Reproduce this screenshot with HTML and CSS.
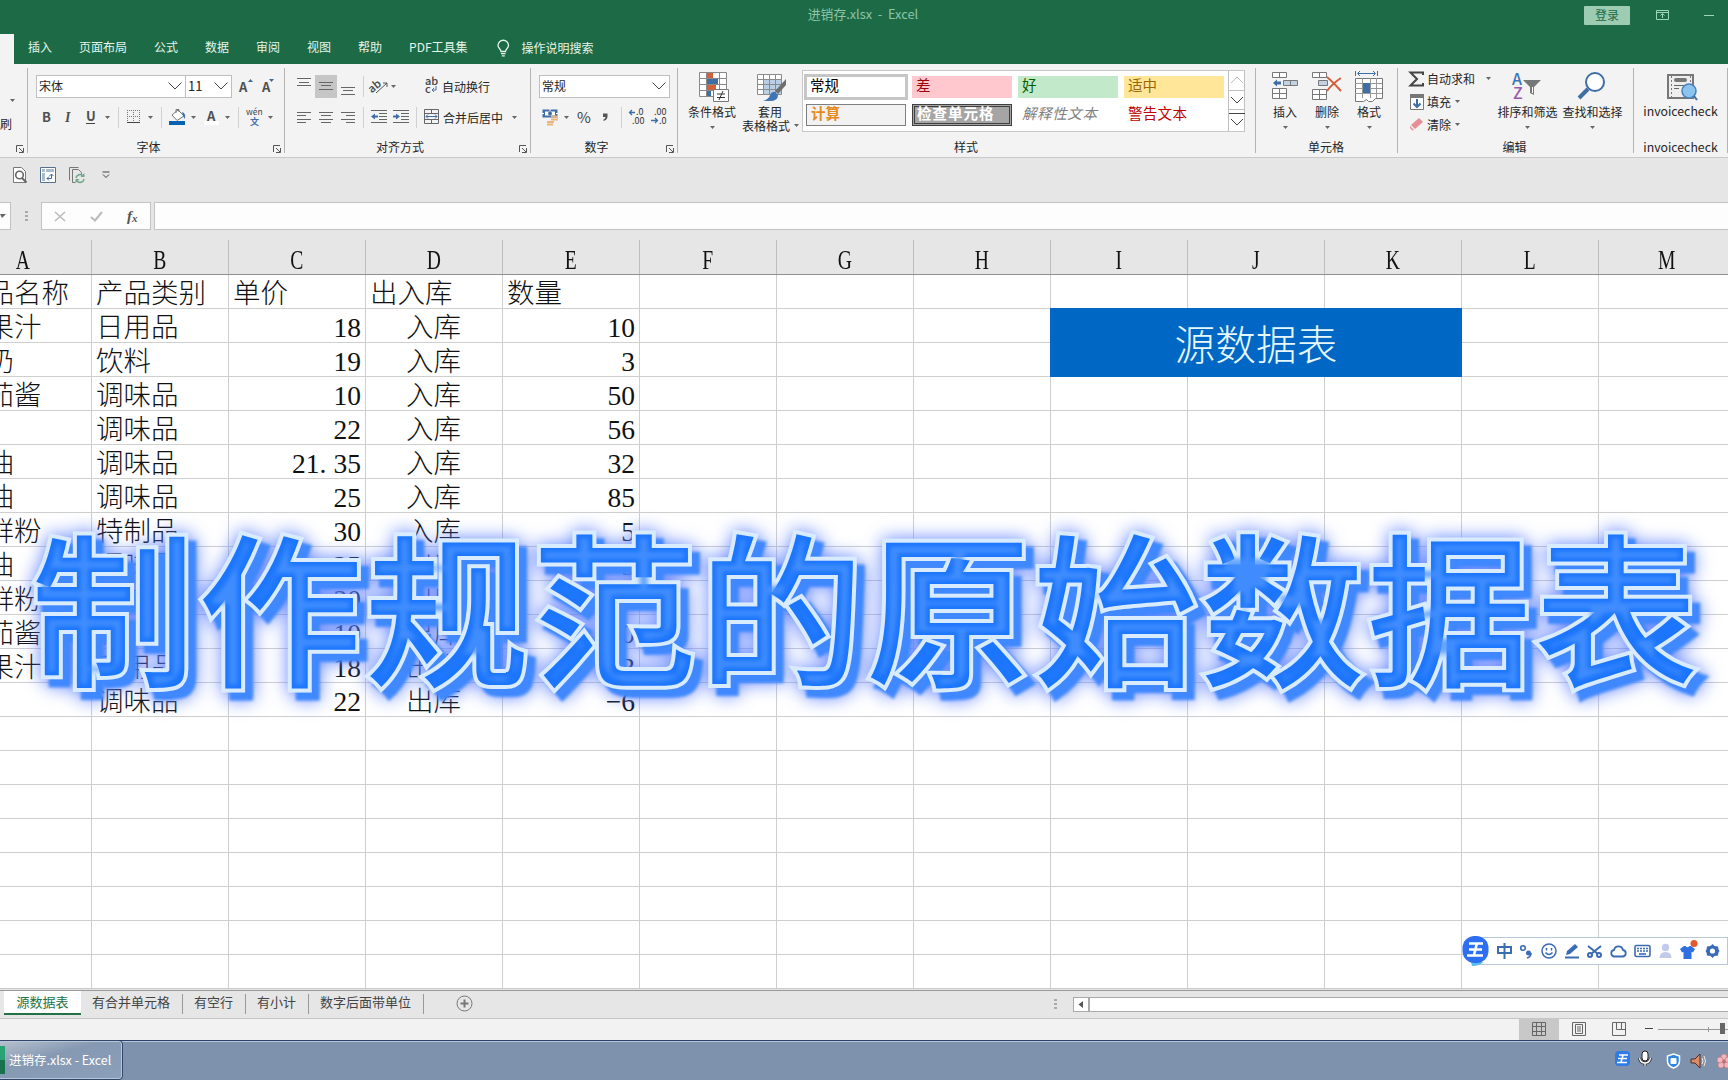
FILE: index.html
```html
<!DOCTYPE html>
<html lang="zh-CN">
<head>
  <meta charset="UTF-8">
  <meta name="viewport" content="width=device-width, initial-scale=1.0">
  <title>进销存.xlsx - Excel</title>
  <link rel="stylesheet" href="styles.css">
</head>
<body>
  <header class="titlebar">
    <div class="doc-title">进销存.xlsx&nbsp; - &nbsp;Excel</div>
    <div class="window-tools">
      <button class="login">登录</button>
      <svg width="13" height="10" fill="none" stroke="#9fd6b9"><path d="M.5.5h12v9H.5zM.5 2.500h12M6.500 8V4M4.500 5.500l2-2 2 2"/></svg>
      <svg width="10" height="10" stroke="#9fd6b9"><path d="M0 5.500h10"/></svg>
    </div>
  </header>

  <nav class="tabs">
    <span class="tab-active"></span>
    <a>插入</a><a>页面布局</a><a>公式</a><a>数据</a><a>审阅</a><a>视图</a><a>帮助</a><a>PDF工具集</a>
    <a class="tell-me">
      <svg width="13" height="17" fill="none" stroke="#e4f5ea" stroke-width="1.300"><path d="M4 11.500C4 9 1 8.500 1 5.500a5 5 0 0 1 10.500 0C11.500 8.500 8.500 9 8.500 11.500zM4 13.700h4.500M4.800 15.800h3"/></svg>
      操作说明搜索
    </a>
  </nav>

  <section class="ribbon">
    <div class="group group-clip">
      <svg width="27" height="70"><path d="M10 35h5l-2.500 3z" fill="#666"/></svg>
      <span class="clip-text">刷</span>
      <svg class="launcher" width="8" height="8"><use href="#launch"/></svg>
    </div>

    <div class="group group-font">
      <div class="row">
        <div class="combo combo-font">宋体<svg width="14" height="8"><use href="#chev"/></svg></div>
        <div class="combo combo-size">11<svg width="14" height="8"><use href="#chev"/></svg></div>
        <svg width="50" height="23" class="glyphs"><text x="7" y="17" font-size="14">A</text><path d="M16 7h5l-2.500-3z" fill="#44698f"/><text x="30" y="17" font-size="12">A</text><path d="M37 4h5l-2.500 3z" fill="#44698f"/></svg>
      </div>
      <div class="row">
        <svg width="82" height="23" class="glyphs"><text x="6" y="15.500">B</text><text x="29" y="15.500" class="ital">I</text><text x="50" y="15">U</text><path d="M50 17.500h9" stroke="#444"/><path d="M69 10h5l-2.500 3z" fill="#666"/></svg>
        <i class="sep"></i>
        <svg width="42" height="23"><path d="M8.500 4v13M14.500 4v13M20.500 4v13M8 4.500h13M8 10.500h13" stroke="#777" stroke-dasharray="1 1"/><path d="M8 16.500h13" stroke="#444"/><path d="M29 10h5l-2.500 3z" fill="#666"/></svg>
        <i class="sep"></i>
        <svg width="76" height="23" class="glyphs"><path d="M10 9l6-5 6 6-7 4.500zM14 7V3.500h3V6" fill="#fff" stroke="#777"/><path d="M20 6q4 1 3 7l-2-3z" fill="#3f6ea5"/><path d="M7 15h16v4H7z" fill="#0563b0"/><path d="M29 10h5l-2.500 3z" fill="#666"/><path d="M42 15h15v4H42z" fill="#fff"/><text x="45" y="15">A</text><path d="M63 10h5l-2.500 3z" fill="#666"/></svg>
        <i class="sep"></i>
        <svg width="40" height="23"><text x="7" y="9" font-size="8.500" fill="#444">wén</text><text x="11" y="19" font-size="9" font-weight="700" fill="#4a70b0">文</text><path d="M29 10h5l-2.500 3z" fill="#666"/></svg>
      </div>
      <div class="label">字体</div>
      <svg class="launcher" width="8" height="8"><use href="#launch"/></svg>
    </div>

    <div class="group group-align">
      <div class="row">
        <svg width="69" height="23" stroke="#666"><path d="M21 0h22v23H21z" fill="#c6c6c6" stroke="none"/><path d="M3 3.500h14M5 7.500h10M3 10.500h14M25 7.500h14M27 10.500h10M25 14.500h14M47 12.500h14M49 15.500h10M47 19.500h14"/></svg>
        <i class="sep"></i>
        <svg width="53" height="23"><text x="4" y="14" font-size="11" font-weight="500" fill="#444" transform="rotate(-40 12 11)">ab</text><path d="M12 18l11-10M23 8v4M23 8h-4" fill="none" stroke="#555"/><path d="M27 10h5l-2.500 3z" fill="#666"/></svg>
        <svg width="25" height="23"><text x="8" y="9.500" font-size="11" font-weight="500" fill="#444">ab</text><text x="8" y="18" font-size="11" font-weight="500" fill="#444">c</text><path d="M19 11v4h-4M17 13l-2 2 2 2" fill="none" stroke="#4a70a0"/></svg>
        <span>自动换行</span>
      </div>
      <div class="row">
        <svg width="69" height="23" stroke="#666"><path d="M3 6.500h14M3 9.500h9M3 13.500h14M3 16.500h9M25 6.500h14M27 9.500h10M25 13.500h14M27 16.500h10M47 6.500h14M52 9.500h9M47 13.500h14M52 16.500h9"/></svg>
        <i class="sep"></i>
        <svg width="52" height="23"><path d="M7 4.500h16M15 7.500h8M15 10.500h8M15 13.500h8M7 16.500h16M29 4.500h16M37 7.500h8M37 10.500h8M37 13.500h8M29 16.500h16" stroke="#666"/><path d="M7 10.500l4-3v2h3v2h-3v2zM36 10.500l-4-3v2h-3v2h3v2z" fill="#3f6ea5"/></svg>
        <i class="sep"></i>
        <svg width="26" height="23" fill="none"><path d="M7.500 3.500h14v14h-14zM7.500 7.500h14M7.500 13.500h14M14.500 3.500v4M14.500 13.500v4" stroke="#666"/><path d="M9 10.500h11M11 8.500l-2 2 2 2M18 8.500l2 2-2 2" stroke="#3f6ea5"/></svg>
        <span>合并后居中</span>
        <svg width="20" height="23"><path d="M9 10h5l-2.500 3z" fill="#666"/></svg>
      </div>
      <div class="label">对齐方式</div>
      <svg class="launcher" width="8" height="8"><use href="#launch"/></svg>
    </div>

    <div class="group group-number">
      <div class="row">
        <div class="combo combo-number">常规<svg width="14" height="8"><use href="#chev"/></svg></div>
      </div>
      <div class="row">
        <svg width="82" height="23"><path d="M3.500 3.500h15v8h-15z" fill="#3f6ea5"/><path d="M6 5.500h10v4H6z" fill="#fff"/><path d="M3 7.500h2M17 7.500h2M11 3v2" stroke="#fff"/><circle cx="11" cy="7.500" r="2" fill="#3f6ea5"/><path d="M12 10.500h7M12 13.500h7M8 16h7M8 18.500h6" stroke="#eab579" stroke-width="2"/><path d="M25 10h5l-2.500 3z" fill="#666"/><text x="38" y="17" font-size="15" fill="#444">%</text><path d="M64 7.500h4.500v3q0 3-4 4.500v-1.500q2-1 2-2.500H64z" fill="#555"/></svg>
        <i class="sep"></i>
        <svg width="50" height="23" class="decimals"><text x="14" y="9">.0</text><text x="10" y="18">.00</text><path d="M13 6.500H8M10 4L7.500 6.500 10 9" /><text x="32" y="9">.00</text><text x="37" y="18">.0</text><path d="M29 14.500h6M33 12l2.500 2.500L33 17"/></svg>
      </div>
      <div class="label">数字</div>
      <svg class="launcher" width="8" height="8"><use href="#launch"/></svg>
    </div>

    <div class="group group-styles">
      <div class="big-buttons">
        <div class="big big-cond">
          <svg width="26" height="31"><path d="M.5.5h27v24H.5z" fill="#fff"/><path d="M8 1h6v5H8zM8 13h9v5H8z" fill="#d1603d"/><path d="M8 7h11v5H8zM8 19h4v5H8z" fill="#3f6ea5"/><path d="M.5.5h27v24H.500zM.5 6.500h27M.5 12.500h27M.5 18.500h27M7.500.5v24M20.500.5v24" fill="none" stroke="#8a8a8a"/><path d="M14.500 17.500h15v12h-15z" fill="#fff" stroke="#777"/><path d="M18 22h8M18 25.500h8M24 19l-4 9" stroke="#333"/></svg>
          <span>条件格式</span>
          <svg width="5" height="3"><use href="#caret"/></svg>
        </div>
        <div class="big big-table">
          <svg width="27" height="31"><path d="M.5 2.500h24v20H.5z" fill="#fff"/><path d="M7 8h18v14H7z" fill="#b9cfe6"/><path d="M.5 2.500h24v20H.5zM.5 7.500h24M.5 12.500h24M.5 17.500h24M6.500 2.500v20M12.500 2.500v20M18.500 2.500v20" fill="none" stroke="#8a8a8a"/><path d="M29 7v6l-8 9-3-3z" fill="#6e6e6e"/><path d="M18 20l3 3q0 6-8 6H6q6-2 7-6 2-4 5-3z" fill="#3f74b5"/></svg>
          <span>套用</span>
          <span class="with-caret">表格格式<svg width="5" height="3"><use href="#caret"/></svg></span>
        </div>
      </div>
      <div class="gallery">
        <div class="swatches">
          <div class="sw sw-normal">常规</div><div class="sw sw-bad">差</div><div class="sw sw-good">好</div><div class="sw sw-neutral">适中</div>
          <div class="sw sw-calc">计算</div><div class="sw sw-check">检查单元格</div><div class="sw sw-explain">解释性文本</div><div class="sw sw-warn">警告文本</div>
        </div>
        <div class="gallery-nav">
          <svg width="16" height="20" fill="none" stroke="#bbb"><path d="M2 12l6-6 6 6"/></svg>
          <svg width="16" height="19" fill="none" stroke="#444"><path d="M2 6l6 6 6-6"/></svg>
          <svg width="16" height="21" fill="none" stroke="#444"><path d="M0 3.500h16M2 9l6 6 6-6"/></svg>
        </div>
      </div>
      <div class="label">样式</div>
    </div>

    <div class="group group-cells">
      <div class="big-buttons">
        <div class="big">
          <svg width="28" height="31"><path d="M1.500.5h14v5h-14zM8.500.5v5M1.500 16.500h14v10h-14zM8.500 16.500v10M1.500 21.500h14" fill="#fff" stroke="#777"/><path d="M12.500 8.500h14v5h-14zM19.500 8.500v5" fill="#c3d3e3" stroke="#777"/><path d="M2 11l4-3.500v2h4v3H6v2z" fill="#3f6ea5"/></svg>
          <span>插入</span>
          <svg width="5" height="3"><use href="#caret"/></svg>
        </div>
        <div class="big">
          <svg width="30" height="31"><path d="M.5.5h14v5H.5zM7.500.5v5M.5 17.500h14v10H.5zM7.500 17.500v10M.5 22.500h14" fill="#fff" stroke="#777"/><path d="M6.500 8.500h9v5h-9z" fill="#c3d3e3" stroke="#777"/><path d="M15 5q6 5 14 14M29 6q-8 5-14 13" fill="none" stroke="#d1603d" stroke-width="2"/></svg>
          <span>删除</span>
          <svg width="5" height="3"><use href="#caret"/></svg>
        </div>
        <div class="big">
          <svg width="30" height="31"><path d="M1.500 6.500h27v20h-7l-3 3h-4l-2-2-3 2h-8z" fill="#fff" stroke="#777"/><path d="M1 11.500h27M1 16.500h27M1 21.500h27M8.500 6v20M16.500 6v20M22.500 6v20" stroke="#999"/><path d="M9 11h7v10H9z" fill="#3f6ea5"/><path d="M1.500-1v5M23.500-1v5M4 1.500h17M6-1L3.500 1.500 6 4M19-1l2.500 2.500L19 4" fill="none" stroke="#3f6ea5"/></svg>
          <span>格式</span>
          <svg width="5" height="3"><use href="#caret"/></svg>
        </div>
      </div>
      <div class="label">单元格</div>
    </div>

    <div class="group group-edit">
      <div class="small-list">
        <div><svg width="15" height="16"><path d="M14 4V1.500H1.500L8 8l-6.500 6.500H14V12" fill="none" stroke="#444" stroke-width="2"/></svg>自动求和<svg class="far" width="5" height="3"><use href="#caret"/></svg></div>
        <div><svg width="15" height="16"><path d="M1.500.5h13v15h-13z" fill="#fff" stroke="#777"/><path d="M1 0h14v4H1z" fill="#777"/><path d="M8 5v8M4.500 9.500L8 13l3.500-3.500" fill="none" stroke="#3f6ea5" stroke-width="2"/></svg>填充<svg width="5" height="3"><use href="#caret"/></svg></div>
        <div><svg width="15" height="16"><path d="M2 8l8-7 4 4-8 7z" fill="#e58e98"/><path d="M1 9l4 4-1.500.5L1 11z" fill="#e58e98"/></svg>清除<svg width="5" height="3"><use href="#caret"/></svg></div>
      </div>
      <div class="big-buttons">
        <div class="big">
          <svg width="30" height="31"><text x="-1" y="13" font-size="16" font-weight="500" fill="#3f74b5">A</text><text x="0" y="27" font-size="16" font-weight="500" fill="#9a5ab0">Z</text><path d="M10 8h18l-7 7v8l-4-2v-6z" fill="#777"/><path d="M19.500 15v6" stroke="#fff"/></svg>
          <span>排序和筛选</span>
          <svg width="5" height="3"><use href="#caret"/></svg>
        </div>
        <div class="big">
          <svg width="30" height="31"><circle cx="17" cy="10" r="9" fill="#fff" stroke="#3f6ea5" stroke-width="2"/><path d="M10 17L1 26" stroke="#3f6ea5" stroke-width="4"/></svg>
          <span>查找和选择</span>
          <svg width="5" height="3"><use href="#caret"/></svg>
        </div>
      </div>
      <div class="label">编辑</div>
    </div>

    <div class="group group-invoice">
      <div class="big-buttons">
        <div class="big">
          <svg width="30" height="31"><path d="M2 3h25v23H2z" fill="#eee" stroke="#777" stroke-width="2"/><path d="M5.500 4v21M24.500 4v21" stroke="#777" stroke-dasharray="2 2"/><rect x="8" y="6" width="13" height="4" rx="2" fill="#777"/><path d="M8 13.500h10M8 16.500h5" stroke="#666"/><circle cx="23" cy="19" r="7" fill="#8cc4ef" stroke="#4a80b8" stroke-width="1.500"/><path d="M28 24l3 4" stroke="#3f6ea5" stroke-width="2"/></svg>
          <span>invoicecheck</span>
        </div>
      </div>
      <div class="label">invoicecheck</div>
    </div>
  </section>

  <div class="quickbar">
    <svg width="14" height="16" fill="none"><path d="M.5.5h8l4 4v11H.5z" fill="#fff" stroke="#777"/><circle cx="6.500" cy="8" r="3.800" stroke="#666" stroke-width="1.600"/><path d="M9 11l4.500 4.500" stroke="#666" stroke-width="2"/></svg>
    <svg width="16" height="16" fill="none"><path d="M.5.5h15v15H.5z" fill="#fff" stroke="#54708c"/><path d="M2 2h3v3H2zM6 2h8v3H6zM2 6h3v8H2z" fill="#a9bccd"/><path d="M11.500 7v4.500H7M9.500 9l2-2 2 2M9 9.500l-2 2 2 2" stroke="#3f6ea5"/></svg>
    <svg width="17" height="16" fill="none"><path d="M.5 13.500V.5h9M3.500 15.500V2.500h6l3 3v3M3.500 15.500h3" stroke="#777"/><path d="M7 11a4 4 0 0 1 7-2M15 12a4 4 0 0 1-7 2" stroke="#6fa78c" stroke-width="1.600"/><path d="M15.500 6v4h-4zM6.500 16v-4h4z" fill="#6fa78c"/></svg>
    <svg width="8" height="8" fill="none" stroke="#444"><path d="M.5 1h7M1 3.500L4 6.500l3-3"/></svg>
  </div>

  <div class="formula">
    <div class="namebox"><svg width="6" height="4"><path d="M0 0h6L2 4z" fill="#666"/></svg></div>
    <div class="dots"></div>
    <div class="fx">
      <svg width="12" height="11" fill="none" stroke="#bbb" stroke-width="1.600"><path d="M1 1l10 9M11 1L1 10"/></svg>
      <svg width="13" height="11" fill="none" stroke="#bbb" stroke-width="2"><path d="M1 6l4 3.500L12 1"/></svg>
      <em>f<sub>x</sub></em>
    </div>
    <div class="input"></div>
  </div>

  <main class="sheet">
    <div class="cols">
      <b>A</b><b>B</b><b>C</b><b>D</b><b>E</b><b>F</b><b>G</b><b>H</b><b>I</b><b>J</b><b>K</b><b>L</b><b>M</b>
    </div>
    <div class="cells">
      <span>产品名称</span><span>产品类别</span><span>单价</span><span>出入库</span><span>数量</span>
      <span>苹果汁</span><span>日用品</span><span class="num">18</span><span class="mid">入库</span><span class="num">10</span>
      <span>牛奶</span><span>饮料</span><span class="num">19</span><span class="mid">入库</span><span class="num">3</span>
      <span>番茄酱</span><span>调味品</span><span class="num">10</span><span class="mid">入库</span><span class="num">50</span>
      <span>盐</span><span>调味品</span><span class="num">22</span><span class="mid">入库</span><span class="num">56</span>
      <span>酱油</span><span>调味品</span><span class="num">21<i>.</i>35</span><span class="mid">入库</span><span class="num">32</span>
      <span>香油</span><span>调味品</span><span class="num">25</span><span class="mid">入库</span><span class="num">85</span>
      <span>海鲜粉</span><span>特制品</span><span class="num">30</span><span class="mid">入库</span><span class="num">5</span>
      <span>酱油</span><span>调味品</span><span class="num">25</span><span class="mid">出库</span><span class="num">-5</span>
      <span>海鲜粉</span><span>特制品</span><span class="num">30</span><span class="mid">出库</span><span class="num">-1</span>
      <span>番茄酱</span><span>调味品</span><span class="num">10</span><span class="mid">出库</span><span class="num">-10</span>
      <span>苹果汁</span><span>日用品</span><span class="num">18</span><span class="mid">出库</span><span class="num">-3</span>
      <span>盐</span><span>调味品</span><span class="num">22</span><span class="mid">出库</span><span class="num">−6</span>
    </div>
    <div class="merged">源数据表</div>
  </main>

  <footer class="sheet-tabs">
    <span class="current">源数据表</span><span>有合并单元格</span><span>有空行</span><span>有小计</span><span>数字后面带单位</span>
    <svg class="add" width="17" height="17" fill="none" stroke="#777"><circle cx="8.500" cy="8.500" r="7.500"/><path d="M8.500 4.500v8M4.500 8.500h8" stroke-width="2"/></svg>
    <div class="dots dots-scroll"></div>
    <div class="hscroll"><svg width="14" height="13"><path d="M9 3v7L4.500 6.500z" fill="#555"/></svg></div>
  </footer>

  <div class="status">
    <span class="view on"><svg width="14" height="14" fill="none" stroke="#666"><path d="M.5.5h13v13H.5zM4.500.5v13M9.500.5v13M.5 4.500h13M.5 9.500h13"/></svg></span>
    <span class="view"><svg width="14" height="14" fill="none" stroke="#666"><path d="M.5.5h13v13H.5zM3.500 2.500h7v9h-7zM5 5h4M5 7h4M5 9h4"/></svg></span>
    <span class="view"><svg width="14" height="14" fill="none" stroke="#666"><path d="M.5.5h13v13H.5zM4.500.5v7h5v-7M9 7.500h4"/></svg></span>
    <svg width="89" height="20"><path d="M6 9.500h8" stroke="#444"/><path d="M19 10.500h70M69.500 8v5" stroke="#999"/><path d="M81 4h5v11h-5z" fill="#666"/></svg>
  </div>

  <div class="taskbar">
    <div class="task"><i class="task-icon"></i>进销存.xlsx - Excel</div>
    <div class="tray">
      <svg width="16" height="16"><rect width="15" height="15" rx="4" fill="#2f7be8"/><path d="M4 4h9M3 7.500h9M2 11.500h10M8 4l-2 7.500" stroke="#fff" stroke-width="1.600"/></svg>
      <svg width="14" height="17"><rect x="4" y="1" width="6" height="10" rx="3" fill="#fff" stroke="#222"/><path d="M1.500 8q1 5 5.500 5t5.500-5M7 13v3" fill="none" stroke="#222" stroke-width="3"/><path d="M1.500 8q1 5 5.500 5t5.500-5M7 13v3" fill="none" stroke="#fff" stroke-width="1.300"/></svg>
      <svg width="15" height="16"><path d="M7.500 1l6 2v5q0 5-6 7-6-2-6-7V3z" fill="#2f87e0" stroke="#fff" stroke-width="1.500"/><rect x="4.500" y="5" width="6" height="6" rx="1" fill="#fff"/></svg>
      <svg width="17" height="16"><path d="M1 6h4l5-5v14l-5-5H1z" fill="#d98a66" stroke="#5a2a1a"/><path d="M12 5q2 3 0 6M14 3q3 5 0 10" fill="none" stroke="#f3e8e0"/></svg>
      <svg width="16" height="16" fill="#f0b8bc" stroke="#c3787f" stroke-width=".7"><circle cx="8" cy="4" r="3"/><circle cx="12" cy="7" r="3"/><circle cx="11" cy="12" r="3"/><circle cx="5" cy="12" r="3"/><circle cx="4" cy="7" r="3"/><circle cx="8" cy="8.500" r="1.500" fill="#c86a76"/></svg>
    </div>
  </div>

  <!-- input method toolbar floating over the sheet -->
  <div class="ime">
    <svg class="ime-logo" width="27" height="31"><path d="M9 26h12q-3 4-11 4z" fill="#56bdf5"/><rect x=".5" width="26" height="27" rx="12" fill="#2d6ff0"/><path d="M7 7.500h14M7 13.500h13M5 19.500h16M15 7l-3 12" stroke="#fff" stroke-width="2.600"/></svg>
    <svg width="15" height="16" fill="none" stroke="#3a6bb5" stroke-width="2"><path d="M1 4h13v6H1zM7.500 0v16"/></svg>
    <svg width="14" height="16"><circle cx="4" cy="5" r="2.300" fill="none" stroke="#3a6bb5" stroke-width="1.600"/><circle cx="9.500" cy="10" r="2.500" fill="#3a6bb5"/><path d="M12 10q0 4-4 5" fill="none" stroke="#3a6bb5" stroke-width="1.600"/></svg>
    <svg width="16" height="16" fill="none" stroke="#3a6bb5" stroke-width="1.500"><circle cx="8" cy="8" r="7"/><path d="M4.500 9.500q3.500 4 7 0M5.500 5v2.500M10.500 5v2.500"/></svg>
    <svg width="15" height="16"><path d="M2 12l1-4 8-7 3 3-8 7z" fill="#3a6bb5"/><path d="M1 14.500h14" stroke="#3a6bb5" stroke-width="2"/></svg>
    <svg width="15" height="16" fill="none" stroke="#3a6bb5" stroke-width="2"><path d="M1 3l10 8M14 3L4 11"/><circle cx="3" cy="12" r="2"/><circle cx="12" cy="12" r="2"/></svg>
    <svg width="17" height="16" fill="none" stroke="#3a6bb5" stroke-width="1.800"><path d="M4 13.500a3.300 3.300 0 0 1 0-6.500 4.600 4.600 0 0 1 9 0 3.300 3.300 0 0 1 0 6.500z"/></svg>
    <svg width="17" height="16" fill="none" stroke="#3a6bb5" stroke-width="1.600"><rect x="1" y="2.500" width="15" height="11" rx="1.500"/><path d="M3 5.500h11M3 8h11" stroke-dasharray="2 1"/><path d="M5 11h7"/></svg>
    <svg width="13" height="16" fill="#c3cbea"><circle cx="6.500" cy="4.500" r="3.700"/><path d="M.5 15q0-6 6-6t6 6z"/></svg>
    <svg width="18" height="20"><path d="M1 8l4-3h1.500q2 2.500 4 0H12l4 3-2 3.500-1.500-.8V18h-8v-7.300L3 11.500z" fill="#2f6fe0"/><circle cx="15" cy="2.500" r="3.500" fill="#e8572c"/></svg>
    <svg width="15" height="16"><path d="M7.500 1l2 2 3.500.5.5 3 1 1.500-1 1.500-.5 3-3.500.5-2 2-2-2-3.500-.5-.5-3L.5 8l1-1.500.5-3L5.500 3z" fill="#3a6bb5"/><circle cx="7.500" cy="8" r="2.600" fill="#fff"/></svg>
  </div>

  <div class="banner"><span>制作规范的原始数据表</span></div>

  <svg class="defs" width="0" height="0">
    <symbol id="caret"><path d="M0 0h5L2.500 3z" fill="#666"/></symbol>
    <symbol id="chev"><path d="M.5.5L7 7l6.500-6.500" fill="none" stroke="#444"/></symbol>
    <symbol id="launch"><path d="M.5 7V.5H7M3 3l4 4M7.500 3v4.500H3" fill="none" stroke="#555"/></symbol>
    <!-- soft light line along the middle of each stroke -->
    <filter id="core" x="-2%" y="-5%" width="104%" height="110%" color-interpolation-filters="sRGB">
      <feMorphology in="SourceAlpha" operator="erode" radius="8"/>
      <feGaussianBlur stdDeviation="2" result="mid"/>
      <feFlood flood-color="#4a92ff" flood-opacity=".8"/>
      <feComposite in2="mid" operator="in" result="light"/>
      <feMerge><feMergeNode in="SourceGraphic"/><feMergeNode in="light"/></feMerge>
    </filter>
  </svg>
</body>
</html>
```
FILE: styles.css
```css
* {
  box-sizing: border-box;
}
body {
  margin: 0;
  width: 1728px;
  height: 1080px;
  overflow: hidden;
  position: relative;
  background: #e6e6e6;
  color: #262626;
  font: 12px/16px "Noto Sans CJK SC", sans-serif;
}
svg {
  display: block;
  flex: none;
  overflow: visible;
}
.defs {
  position: absolute;
}

/* title and tabs */
.titlebar {
  height: 34px;
  background: #1c6a46;
  display: grid;
  grid-template-columns: 1fr auto 1fr;
  align-items: center;
  padding-bottom: 4px;
}
.doc-title {
  grid-column: 2;
  color: #8fc4a6;
  font-size: 12.800px;
  line-height: 14px;
  padding: 0 2px 2px 0;
  white-space: pre;
}
.window-tools {
  display: flex;
  justify-content: flex-end;
  align-items: center;
  padding-right: 14px;
}
.window-tools svg {
  margin-left: 26px;
}
.window-tools svg + svg {
  margin-left: 35px;
}
.login {
  width: 46px;
  height: 19px;
  padding: 0;
  border: 0;
  border-radius: 1px;
  background: #9dccb2;
  color: #1c6a46;
  font: 12px/18px "Noto Sans CJK SC", sans-serif;
}
.tabs {
  height: 30px;
  background: #1c6a46;
  color: #e4f5ea;
  display: flex;
  align-items: flex-start;
  gap: 27px;
  line-height: 26px;
}
.tab-active {
  width: 14px;
  height: 30px;
  margin-right: -13px;
  background: #f3f3f3;
}
.tell-me {
  display: flex;
  align-items: center;
  gap: 12px;
  margin-left: 2px;
  padding-top: 1px;
}

/* ribbon */
.ribbon {
  height: 94px;
  background: #f3f3f3;
  border-bottom: 1px solid #c8c8c8;
  display: flex;
}
.group {
  position: relative;
  flex: none;
  height: 93px;
  padding: 11px 0 0 8px;
}
.group::after {
  content: "";
  position: absolute;
  right: 0;
  top: 4px;
  width: 1px;
  height: 85px;
  background: #b4b4b4;
}
.group-clip { width: 28px; padding: 0; }
.group-font { width: 257px; }
.group-align { width: 246px; padding-left: 9px; }
.group-number { width: 147px; }
.group-styles { width: 578px; padding: 0 0 0 6px; display: flex; }
.group-cells { width: 142px; padding: 0 0 0 8px; }
.group-edit { width: 236px; padding: 0 0 0 11px; display: flex; }
.group-invoice { width: 94px; padding: 0; }
.clip-text {
  position: absolute;
  left: 0;
  top: 52px;
}
.row {
  display: flex;
  align-items: center;
  height: 23px;
  margin-bottom: 8px;
  white-space: nowrap;
}
.row > span {
  line-height: 15px;
  margin-top: -1px;
}
.label {
  position: absolute;
  left: 0;
  right: 16px;
  top: 75px;
  text-align: center;
}
.group-styles .label,
.group-cells .label { right: 2px; }
.group-edit .label { right: 3px; }
.group-invoice .label { right: 1px; }
.launcher {
  position: absolute;
  right: 4px;
  top: 81px;
}
.sep {
  width: 1px;
  height: 21px;
  background: #d0d0d0;
}
.combo {
  height: 23px;
  border: 1px solid #bfbfbf;
  background: #fff;
  display: flex;
  align-items: center;
  justify-content: space-between;
  padding: 0 3px 1px 2px;
}
.combo-font { width: 150px; }
.combo-size { width: 47px; margin-left: -1px; font-size: 13px; }
.combo-number { width: 131px; }
.glyphs text {
  font-size: 13px;
  font-weight: 700;
  fill: #505050;
}
.glyphs .ital {
  font-family: "Liberation Serif", serif;
  font-style: italic;
  font-size: 14px;
}
.decimals text {
  font-size: 9px;
  fill: #333;
}
.decimals path {
  fill: none;
  stroke: #3f6ea5;
  stroke-width: 1.300;
}
.big-buttons {
  display: flex;
  padding-top: 8px;
}
.big {
  width: 42px;
  display: flex;
  flex-direction: column;
  align-items: center;
  white-space: nowrap;
}
.big span {
  line-height: 15px;
}
.big > svg + span {
  padding-top: 1px;
  margin-bottom: -1px;
}
.big > svg + span + svg {
  margin-top: 8px;
}
.big-cond { width: 56px; }
.big-table { width: 60px; }
.big .with-caret {
  display: flex;
  align-items: center;
  margin-right: -1px;
}
.with-caret svg {
  margin-left: 4px;
}
.group-edit .big-buttons { margin-left: -2px; }
.group-edit .big { width: 65px; }
.group-invoice .big { width: 93px; }
.group-invoice { font-size: 12.300px; }
.small-list {
  width: 88px;
  padding-top: 3px;
}
.small-list div {
  display: flex;
  align-items: center;
  height: 23px;
  gap: 3px;
  white-space: nowrap;
}
.small-list svg:last-child {
  margin-left: 1px;
}
.small-list .far:last-child {
  margin-left: 8px;
}

/* style gallery */
.gallery {
  width: 443px;
  height: 62px;
  margin: 6px 0 0 2px;
  background: #fff;
  border: 1px solid #c8c8c8;
  border-right: 0;
  display: flex;
  justify-content: space-between;
}
.swatches {
  display: grid;
  grid-template-columns: repeat(4, 100px);
  grid-auto-rows: 22px;
  gap: 6px;
  padding: 5px 0 0 3px;
  font-size: 14.500px;
  line-height: 18px;
}
.sw {
  padding-left: 4px;
  white-space: nowrap;
}
.sw-normal {
  color: #000;
  outline: 3px solid #c6c6c6;
  outline-offset: -1px;
}
.sw-bad { background: #ffc7ce; color: #9c0006; }
.sw-good { background: #c3e9cb; color: #006100; }
.sw-neutral { background: #ffe699; color: #9c6500; }
.sw-calc,
.sw-check {
  font-weight: 700;
  line-height: 15px;
}
.sw-calc { border: 1px solid #7f7f7f; background: #f2f2f2; color: #e58a1f; }
.sw-check {
  border: 3px double #3f3f3f;
  background: #a5a5a5;
  color: #fff;
  padding-left: 2px;
  line-height: 12px;
  letter-spacing: 1px;
}
.sw-explain { color: #7f7f7f; font-style: italic; letter-spacing: .6px; }
.sw-warn { color: #c00000; letter-spacing: .3px; }
.gallery-nav svg {
  border: solid #c0c0c0;
  border-width: 0 1px 1px;
  width: 17px;
}
.gallery-nav svg:last-child {
  border-bottom: 0;
}

/* quick access and formula bar */
.quickbar {
  height: 44px;
  display: flex;
  align-items: center;
  gap: 13px;
  padding: 0 0 10px 13px;
}
.quickbar svg:last-child {
  margin-left: 3px;
}
.formula {
  height: 28px;
  display: flex;
}
.namebox,
.fx,
.input {
  border: 1px solid #c3c3c3;
  background: #fdfdfd;
}
.namebox {
  width: 11px;
  border-left: 0;
  display: flex;
  align-items: center;
}
.dots {
  width: 3px;
  height: 11px;
  margin: 9px 13px 0 14px;
  background: repeating-linear-gradient(#aaa 0 2px, transparent 2px 4px);
}
.fx {
  width: 110px;
  display: flex;
  align-items: center;
  gap: 24px;
  padding-left: 12px;
}
.fx em {
  font: italic 700 15px/20px "Liberation Serif", serif;
  color: #555;
}
.fx sub {
  font-size: 11px;
  vertical-align: -1px;
  line-height: 0;
}
.input {
  flex: 1;
  margin-left: 3px;
  border-right: 0;
}

/* worksheet, column A starts left of the window */
.sheet {
  height: 760px;
  padding-top: 10px;
  position: relative;
  overflow: hidden;
}
.cols,
.cells {
  display: grid;
  grid-template-columns: repeat(13, 137px);
  width: 1781px;
  margin-left: -45px;
}
.cols {
  height: 35px;
  background: repeating-linear-gradient(90deg, transparent 0 136px, #bdbdbd 136px 137px);
  border-bottom: 1px solid #8f8f8f;
}
.cols b {
  font: 28px/39px "Liberation Serif", serif;
  color: #111;
  text-align: center;
  padding-right: 2px;
  transform: scaleX(.7);
}
.cells {
  grid-template-columns: repeat(5, 137px);
  grid-auto-rows: 34px;
  height: 714px;
  background:
    repeating-linear-gradient(90deg, transparent 0 136px, #cfcfcf 136px 137px),
    repeating-linear-gradient(#fff 0 33px, #cfcfcf 33px 34px);
  border-bottom: 1px solid #c8c8c8;
  font: 300 27.500px/38px "Liberation Serif", "Noto Sans CJK SC", serif;
  color: #111;
}
.cells span {
  padding: 0 5px 0 4px;
  white-space: nowrap;
}
.cells .num {
  text-align: right;
}
.cells .num i {
  display: inline-block;
  width: 14px;
  text-align: left;
  font-style: normal;
}
.cells .mid {
  padding: 0 7px 0 5px;
  text-align: center;
}
.merged {
  position: absolute;
  left: 1050px;
  top: 78px;
  width: 412px;
  height: 69px;
  background: #0067c5;
  color: #e6f8ff;
  font: 300 40.700px/70px "Noto Sans CJK SC", sans-serif;
  text-align: center;
}

/* sheet tabs and status */
.sheet-tabs {
  height: 29px;
  position: relative;
  border-top: 1px solid #999;
  border-bottom: 1px solid #c6c6c6;
  display: flex;
  padding-left: 4px;
  font-size: 13px;
  color: #444;
}
.sheet-tabs span {
  height: 20px;
  line-height: 16px;
  margin-top: 3px;
  padding: 0 12px 0 11px;
  border-right: 1px solid #999;
}
.sheet-tabs .current {
  width: 77px;
  height: 24px;
  margin-top: 0;
  padding: 0;
  line-height: 21px;
  text-align: center;
  background: #fff;
  color: #217346;
  border: 0;
  border-bottom: 2px solid #217346;
}
.add {
  margin: 4px 0 0 32px;
}
.sheet-tabs .dots-scroll {
  margin: 8px 16px 0 auto;
}
.hscroll {
  width: 655px;
  height: 15px;
  margin-top: 6px;
  background: #fff;
  border: 1px solid #aaa;
  border-right: 0;
}
.hscroll svg {
  border-right: 2px solid #aaa;
  width: 16px;
}
.status {
  height: 21px;
  background: #f2f2f2;
  display: flex;
  justify-content: flex-end;
}
.view {
  width: 40px;
  display: grid;
  place-items: center;
  padding: 0 1px 2px 0;
}
.view.on {
  background: #c8c8c8;
}
.taskbar {
  height: 40px;
  border-top: 1px solid #27426a;
  box-shadow: inset 0 1px #b9c6d8;
  background: #7e92ad;
  display: flex;
  justify-content: space-between;
}
.task {
  width: 122px;
  height: 38px;
  border: 1px solid #b8c6d8;
  border-left: 0;
  outline: 1px solid #30466a;
  border-radius: 0 3px 3px 0;
  background: linear-gradient(165deg, #b4bfcd, #8699b3 40%, #8c9fba);
  color: #fff;
  display: flex;
  align-items: center;
  gap: 4px;
  white-space: nowrap;
  font-size: 12.500px;
}
.task-icon {
  width: 5px;
  height: 28px;
  background: linear-gradient(#29a376 50%, #16734d 50%);
}
.tray {
  display: flex;
  align-items: center;
  gap: 9px;
  margin-right: -4px;
}
.tray svg:first-child {
  margin: -4px -2px 0 0;
}
.tray svg:nth-child(2) {
  margin: -4px 5px 0 0;
}

.ime {
  position: absolute;
  left: 1475px;
  top: 937px;
  width: 253px;
  height: 28px;
  background: #fff;
  border: 1px solid #b9c9dc;
  display: flex;
  align-items: center;
  gap: 7.600px;
}
.ime-logo {
  margin: 0 0 0 -14px;
}

/* caption */
.banner {
  position: absolute;
  left: 31px;
  top: 507px;
  filter: drop-shadow(8px 8px 1.500px #3f88ff) drop-shadow(0 0 9px rgba(85, 122, 255, .9));
}
.banner span {
  display: block;
  font: 500 164.500px/190px "Noto Sans CJK SC", sans-serif;
  letter-spacing: 2.500px;
  white-space: nowrap;
  color: #1c76fd;
  -webkit-text-stroke: 8px #d9ebff;
  paint-order: stroke fill;
  filter: url(#core);
}
```
